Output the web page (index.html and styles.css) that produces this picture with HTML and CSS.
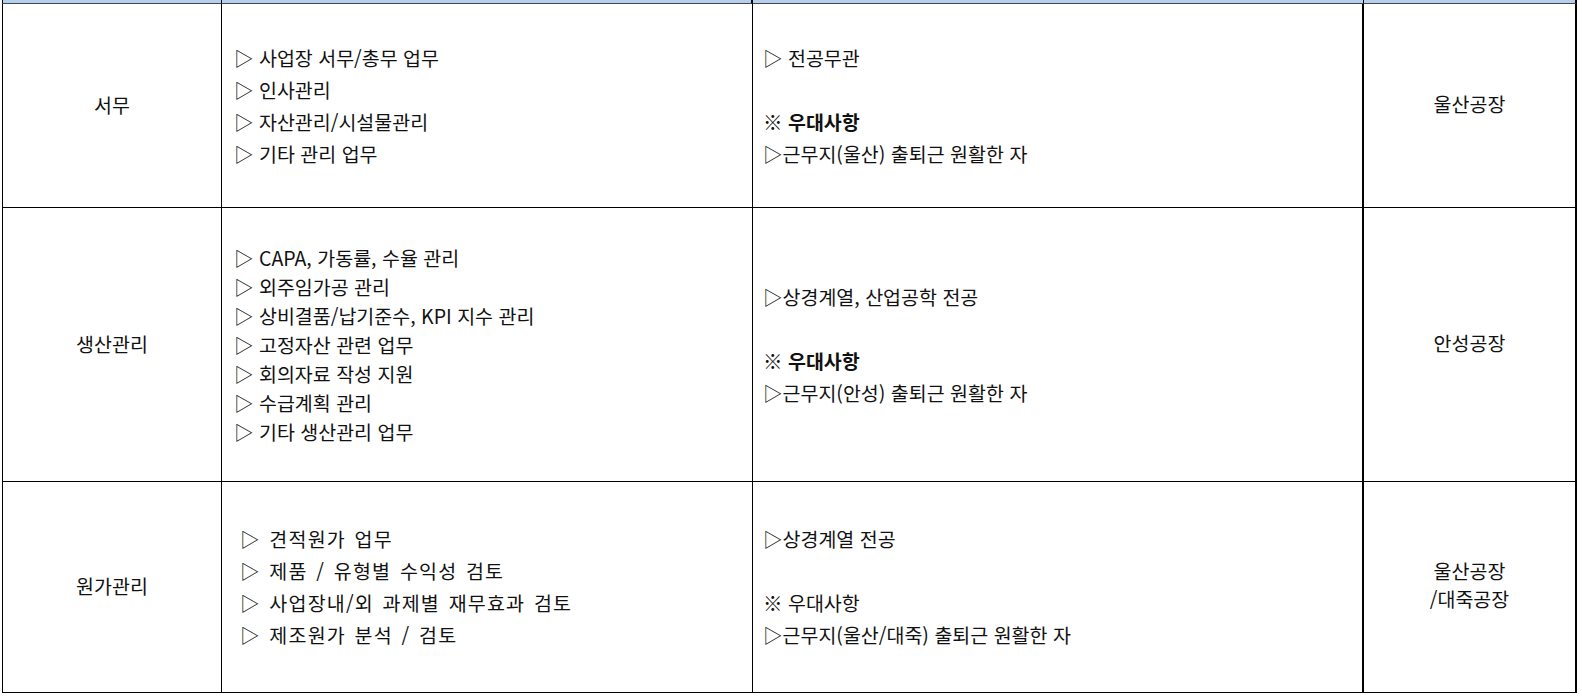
FILE: index.html
```html
<!DOCTYPE html>
<html lang="ko">
<head>
<meta charset="utf-8">
<title>모집부문</title>
<link rel="stylesheet" href="styles.css">
</head>
<body>
<div class="sheet">
  <div class="head"></div>
  <div class="head"></div>
  <div class="head"></div>
  <div class="head last"></div>

  <div class="cell name r1">서무</div>
  <div class="cell list r1">
    <div>▷ 사업장 서무/총무 업무</div>
    <div>▷ 인사관리</div>
    <div>▷ 자산관리/시설물관리</div>
    <div>▷ 기타 관리 업무</div>
  </div>
  <div class="cell req r1 thick">
    <div>▷ 전공무관</div>
    <div class="gap strong">※ 우대사항</div>
    <div>▷근무지(울산) 출퇴근 원활한 자</div>
  </div>
  <div class="cell place r1 last">울산공장</div>

  <div class="cell name r2">생산관리</div>
  <div class="cell list tight r2">
    <div>▷ CAPA, 가동률, 수율 관리</div>
    <div>▷ 외주임가공 관리</div>
    <div>▷ 상비결품/납기준수, KPI 지수 관리</div>
    <div>▷ 고정자산 관련 업무</div>
    <div>▷ 회의자료 작성 지원</div>
    <div>▷ 수급계획 관리</div>
    <div>▷ 기타 생산관리 업무</div>
  </div>
  <div class="cell req r2 thick">
    <div>▷상경계열, 산업공학 전공</div>
    <div class="gap strong">※ 우대사항</div>
    <div>▷근무지(안성) 출퇴근 원활한 자</div>
  </div>
  <div class="cell place r2 last">안성공장</div>

  <div class="cell name r3">원가관리</div>
  <div class="cell list wide r3">
    <div>▷ 견적원가 업무</div>
    <div>▷ 제품 / 유형별 수익성 검토</div>
    <div>▷ 사업장내/외 과제별 재무효과 검토</div>
    <div>▷ 제조원가 분석 / 검토</div>
  </div>
  <div class="cell req r3 thick">
    <div>▷상경계열 전공</div>
    <div class="gap">※ 우대사항</div>
    <div>▷근무지(울산/대죽) 출퇴근 원활한 자</div>
  </div>
  <div class="cell place tight r3 last">
    <div>울산공장</div>
    <div>/대죽공장</div>
  </div>
</div>
</body>
</html>
```

FILE: styles.css
```css
html, body {
  margin: 0;
  padding: 0;
  background: #ffffff;
}

body {
  font-family: "Noto Sans CJK KR", "Noto Sans", sans-serif;
  font-size: 19.5px;
  color: #111111;
}

.sheet {
  margin-left: 2px;
  display: grid;
  grid-template-columns: 220px 531px 611px 213px;
  grid-template-rows: 4px 204px 274px 211px;
  width: 1575px;
}

.head {
  box-sizing: border-box;
  background: #b7cfe9;
  border-bottom: 1px solid #3a4a5c;
  border-right: 1px solid #000000;
}

.head:first-child {
  border-left: 1px solid #000000;
}

.head.last {
  border-right: 2px solid #000000;
}

.head:nth-child(2) {
  border-right: 2px solid #000000;
}

.cell {
  box-sizing: border-box;
  border-right: 1px solid #000000;
  border-bottom: 1px solid #000000;
  display: flex;
  flex-direction: column;
  justify-content: center;
  line-height: 32px;
  white-space: nowrap;
}

.cell.thick,
.cell.last {
  border-right: 2px solid #000000;
}

.name {
  border-left: 1px solid #000000;
  align-items: center;
  text-align: center;
  padding-bottom: 2px;
}

.place {
  align-items: center;
  text-align: center;
  padding-bottom: 4px;
}

.list {
  padding-left: 12px;
}

.list.tight {
  line-height: 29px;
}

.list.wide {
  padding-left: 18px;
  letter-spacing: 1.2px;
  word-spacing: 2px;
}

.req {
  padding-left: 10px;
}

.req .gap {
  margin-top: 32px;
}

.strong {
  font-weight: 700;
}

.place.tight {
  line-height: 28px;
}
```
